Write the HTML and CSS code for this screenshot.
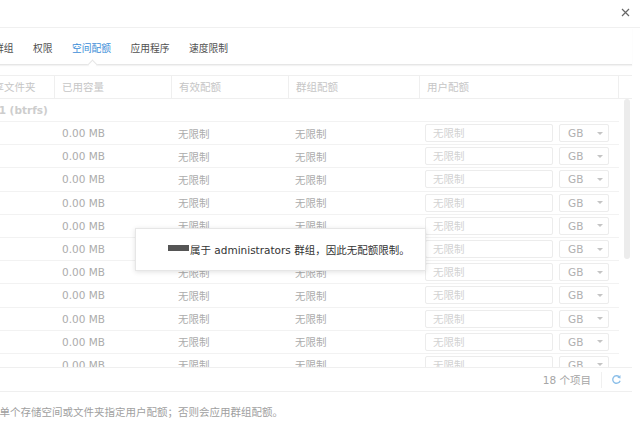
FILE: index.html
```html
<!DOCTYPE html>
<html lang="zh-CN">
<head>
<meta charset="utf-8">
<title>空间配额</title>
<link rel="stylesheet" href="styles.css">
</head>
<body>
<div class="page">
  <div class="titlebar">
    <svg class="close" width="9" height="9" viewBox="0 0 9 9"><path d="M1 1 L8 8 M8 1 L1 8" stroke="#666" stroke-width="1.2" fill="none"/></svg>
  </div>
  <div class="tabbar">
    <div class="tabs">
      <span class="tab">用户群组</span>
      <span class="tab">权限</span>
      <span class="tab active">空间配额</span>
      <span class="tab">应用程序</span>
      <span class="tab">速度限制</span>
    </div>
  </div>
  <div class="grid">
    <div class="ghead">
      <div class="hc c1 first">共享文件夹</div>
      <div class="hc c2">已用容量</div>
      <div class="hc c3">有效配额</div>
      <div class="hc c4">群组配额</div>
      <div class="hc c5">用户配额</div>
      <div class="hc c6"></div>
    </div>
    <div class="gbody">
      <div class="rows">
        <div class="grow">存储空间 1 (btrfs)</div>
        <div class="row"><div class="c c1"></div><div class="c c2">0.00 MB</div><div class="c c3">无限制</div><div class="c c4">无限制</div><div class="c c5"><span class="input">无限制</span><span class="select">GB<i class="caret"></i></span></div></div>
        <div class="row"><div class="c c1"></div><div class="c c2">0.00 MB</div><div class="c c3">无限制</div><div class="c c4">无限制</div><div class="c c5"><span class="input">无限制</span><span class="select">GB<i class="caret"></i></span></div></div>
        <div class="row"><div class="c c1"></div><div class="c c2">0.00 MB</div><div class="c c3">无限制</div><div class="c c4">无限制</div><div class="c c5"><span class="input">无限制</span><span class="select">GB<i class="caret"></i></span></div></div>
        <div class="row"><div class="c c1"></div><div class="c c2">0.00 MB</div><div class="c c3">无限制</div><div class="c c4">无限制</div><div class="c c5"><span class="input">无限制</span><span class="select">GB<i class="caret"></i></span></div></div>
        <div class="row"><div class="c c1"></div><div class="c c2">0.00 MB</div><div class="c c3">无限制</div><div class="c c4">无限制</div><div class="c c5"><span class="input">无限制</span><span class="select">GB<i class="caret"></i></span></div></div>
        <div class="row"><div class="c c1"></div><div class="c c2">0.00 MB</div><div class="c c3">无限制</div><div class="c c4">无限制</div><div class="c c5"><span class="input">无限制</span><span class="select">GB<i class="caret"></i></span></div></div>
        <div class="row"><div class="c c1"></div><div class="c c2">0.00 MB</div><div class="c c3">无限制</div><div class="c c4">无限制</div><div class="c c5"><span class="input">无限制</span><span class="select">GB<i class="caret"></i></span></div></div>
        <div class="row"><div class="c c1"></div><div class="c c2">0.00 MB</div><div class="c c3">无限制</div><div class="c c4">无限制</div><div class="c c5"><span class="input">无限制</span><span class="select">GB<i class="caret"></i></span></div></div>
        <div class="row"><div class="c c1"></div><div class="c c2">0.00 MB</div><div class="c c3">无限制</div><div class="c c4">无限制</div><div class="c c5"><span class="input">无限制</span><span class="select">GB<i class="caret"></i></span></div></div>
        <div class="row"><div class="c c1"></div><div class="c c2">0.00 MB</div><div class="c c3">无限制</div><div class="c c4">无限制</div><div class="c c5"><span class="input">无限制</span><span class="select">GB<i class="caret"></i></span></div></div>
        <div class="row"><div class="c c1"></div><div class="c c2">0.00 MB</div><div class="c c3">无限制</div><div class="c c4">无限制</div><div class="c c5"><span class="input">无限制</span><span class="select">GB<i class="caret"></i></span></div></div>
      </div>
      <div class="track"><div class="thumb"></div></div>
    </div>
    <div class="gfoot">
      <span class="count">18 个项目</span>
      <span class="sep"></span>
      <svg class="refresh" width="11" height="11" viewBox="0 0 12 12"><path d="M9.9 7.3 A4.1 4.1 0 1 1 8.9 3.1" stroke="#8cbfe9" stroke-width="1.5" fill="none"/><path d="M10.3 1.2 L10.4 4.8 L6.9 4.2 Z" fill="#8cbfe9"/></svg>
    </div>
  </div>
  <p class="note">若有需要，可为单个存储空间或文件夹指定用户配额；否则会应用群组配额。</p>
  <div class="toast"><span class="redact"></span>属于 administrators 群组，因此无配额限制。</div>
</div>
</body>
</html>
```

FILE: styles.css
```css
html, body {
  margin: 0;
  padding: 0;
  background: #fff;
}
body {
  font-family: "DejaVu Sans", "Noto Sans CJK SC", sans-serif;
  font-size: 10.5px;
  color: #aaa;
}
.page {
  position: relative;
  width: 640px;
  height: 423px;
  overflow: hidden;
  background: #fff;
}
.titlebar {
  height: 27px;
  border-bottom: 1px solid #f0f0f0;
  display: flex;
  align-items: center;
  justify-content: flex-end;
  padding-right: 10px;
  box-sizing: content-box;
}
.close {
  display: block;
  margin-top: -3px;
}
.tabbar {
  width: 632px;
  height: 36px;
  border-bottom: 1px solid #e6e6e6;
  box-shadow: 0 1px 1px #f3f3f3;
}
.tabs {
  display: flex;
  gap: 19.5px;
  margin-left: -25.5px;
  padding-top: 6px;
  height: 30px;
  align-items: center;
  white-space: nowrap;
}
.tab {
  position: relative;
  font-size: 9.75px;
  color: #505050;
  line-height: 30px;
}
.tab.active {
  color: #3d8ed8;
}
.tab.active::after {
  content: "";
  position: absolute;
  left: 50%;
  bottom: -4px;
  width: 6px;
  height: 6px;
  margin-left: -3px;
  background: #fff;
  border-left: 1px solid #e6e6e6;
  border-top: 1px solid #e6e6e6;
  transform: rotate(45deg);
}
.grid {
  margin-top: 10px;
  margin-left: -60px;
  width: 692px;
}
.ghead {
  display: flex;
  height: 22px;
  border-top: 1px solid #efefef;
  border-bottom: 1px solid #efefef;
}
.hc {
  box-sizing: border-box;
  border-right: 1px solid #efefef;
  padding-left: 7px;
  line-height: 22px;
  color: #c6c6c6;
  white-space: nowrap;
}
.hc.first {
  padding-left: 43px;
}
.hc.c6 {
  border-right: none;
}
.c1 { width: 115px; }
.c2 { width: 117px; }
.c3 { width: 117px; }
.c4 { width: 131px; }
.c5 { width: 199px; }
.c6 { width: 13px; }
.gbody {
  display: flex;
  height: 268px;
  overflow: hidden;
}
.rows {
  width: 679px;
}
.grow {
  box-sizing: border-box;
  height: 23px;
  line-height: 22px;
  padding-left: 13px;
  font-weight: bold;
  color: #cdcdcd;
  border-bottom: 1px solid #f2f2f2;
  white-space: nowrap;
}
.row {
  display: flex;
  box-sizing: border-box;
  height: 23.2px;
  border-bottom: 1px solid #f2f2f2;
  align-items: center;
}
.c {
  box-sizing: border-box;
  padding-left: 7px;
  white-space: nowrap;
  color: #acacac;
}
.c.c3, .c.c4 {
  padding-left: 6px;
}
.c.c5 {
  display: flex;
  align-items: center;
  gap: 6px;
  padding-left: 5px;
}
.input {
  box-sizing: border-box;
  width: 128px;
  height: 18px;
  border: 1px solid #ececec;
  border-radius: 2px;
  padding-left: 7px;
  line-height: 16px;
  color: #d2d2d2;
}
.select {
  box-sizing: border-box;
  display: flex;
  align-items: center;
  width: 50px;
  height: 18px;
  border: 1px solid #ececec;
  border-radius: 2px;
  padding-left: 8px;
  line-height: 16px;
  color: #b0b0b0;
}
.caret {
  width: 0;
  height: 0;
  margin-left: 14px;
  border-left: 3px solid transparent;
  border-right: 3px solid transparent;
  border-top: 3px solid #c4c4c4;
}
.track {
  width: 13px;
  padding-left: 5px;
  box-sizing: border-box;
}
.thumb {
  width: 6px;
  height: 160px;
  border-radius: 3px;
  background: #ececec;
}
.gfoot {
  display: flex;
  align-items: center;
  justify-content: flex-end;
  width: 692px;
  box-sizing: border-box;
  height: 25px;
  border-top: 1px solid #efefef;
  border-bottom: 1px solid #efefef;
  padding-right: 10px;
}
.count {
  color: #a6a6a6;
  white-space: nowrap;
}
.sep {
  width: 1px;
  height: 16px;
  background: #f0f0f0;
  margin: 0 9px 0 10px;
}
.refresh {
  display: block;
}
.note {
  margin: 12px 0 0 -74px;
  line-height: 16px;
  color: #a0a0a0;
  white-space: nowrap;
}
.toast {
  position: absolute;
  left: 135px;
  top: 228px;
  width: 291px;
  height: 43px;
  box-sizing: border-box;
  display: flex;
  align-items: center;
  padding-left: 32px;
  background: #fff;
  border: 1px solid #e6e6e6;
  box-shadow: 0 1px 5px rgba(0, 0, 0, 0.12);
  color: #333;
  font-size: 10.5px;
  white-space: nowrap;
}
.redact {
  display: inline-block;
  width: 21px;
  height: 6px;
  margin-top: -3px;
  margin-right: 1px;
  background: #555;
}
```
